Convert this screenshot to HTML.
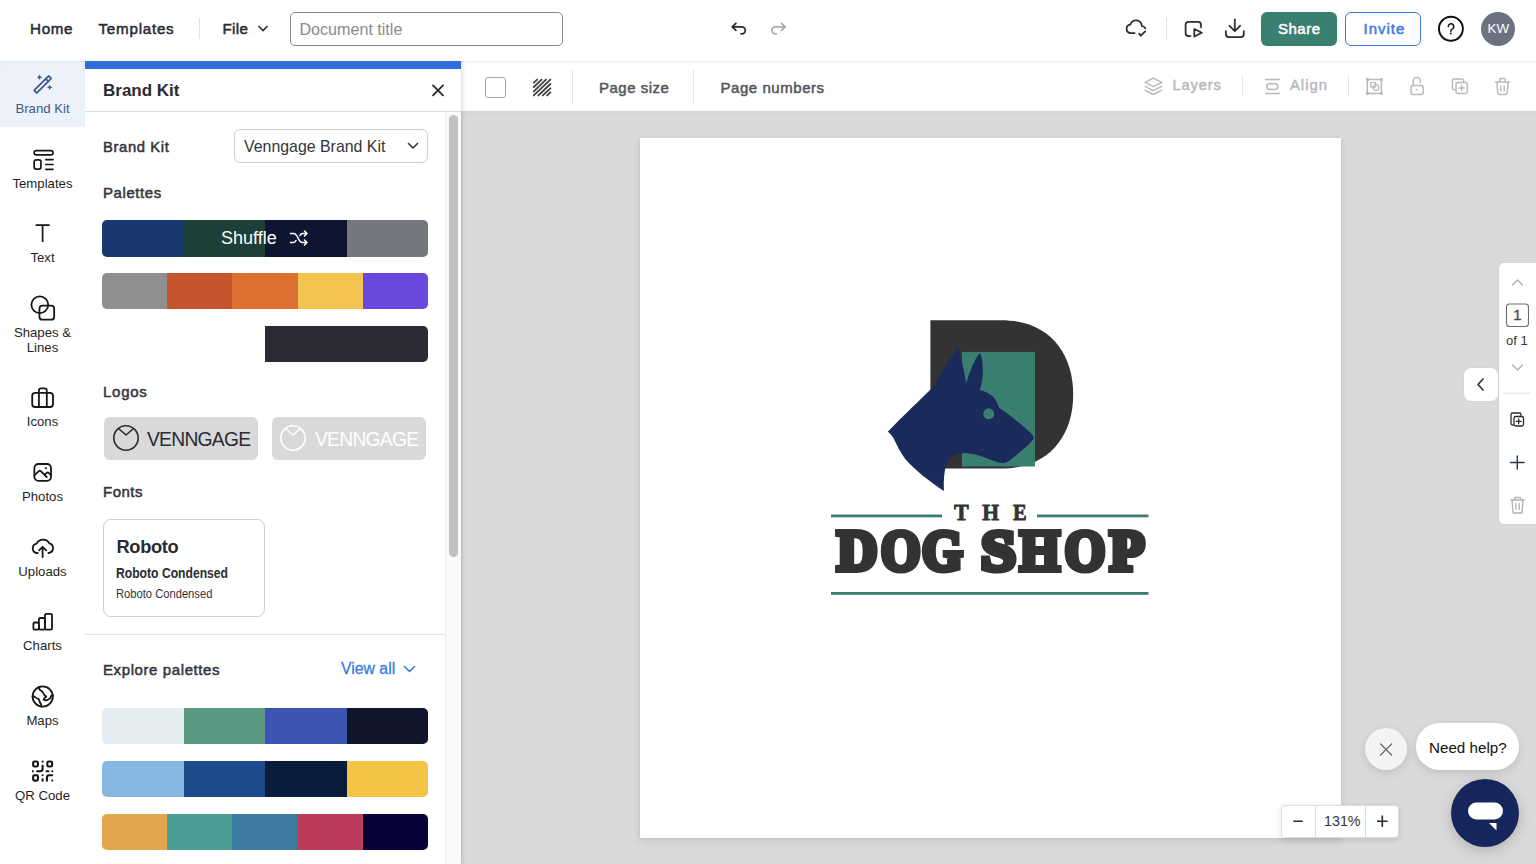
<!DOCTYPE html>
<html><head><meta charset="utf-8">
<style>
*{box-sizing:border-box;margin:0;padding:0}
html,body{width:1536px;height:864px;overflow:hidden;background:#dadada;font-family:"Liberation Sans",sans-serif;color:#2a2b33;position:relative}
.a{position:absolute}
.t{position:absolute;white-space:nowrap;line-height:1}
.hdr{left:0;top:0;width:1536px;height:61px;background:#fff;z-index:5}
.nav{font-size:15.2px;font-weight:700;color:#2a2b33}
.side{left:0;top:60px;width:85px;height:804px;background:#fff;z-index:3}
.sl{position:absolute;left:0;width:85px;text-align:center;font-size:13.2px;color:#1f1f24;line-height:15px;white-space:nowrap}
.si{position:absolute;left:0;top:0}
.panel{left:85px;top:60px;width:376px;height:804px;background:#fff;z-index:2;box-shadow:1px 0 3px rgba(0,0,0,.12)}
.tbar{left:461px;top:61px;width:1075px;height:50px;background:#fff;z-index:1}
.page{left:640px;top:138px;width:701px;height:700px;background:#fff;box-shadow:0 0 2px rgba(0,0,0,.10)}
.lbl{font-size:15px;font-weight:700;color:#33343c}
.pal{position:absolute;left:17px;width:326px;height:37px;border-radius:5px;overflow:hidden;display:flex}
.pal div{flex:1}
.tb{font-size:15px;font-weight:700;color:#55565c}
.dim{color:#b9b9bc;-webkit-text-stroke-color:#b9b9bc}
.sb{font-weight:400!important;-webkit-text-stroke:0.5px currentColor}
</style></head><body>

<!-- HEADER -->
<div class="a hdr">
  <div class="t nav sb" style="left:30px;top:21px;letter-spacing:0.67px">Home</div>
  <div class="t nav sb" style="left:98.5px;top:21px;letter-spacing:0.75px">Templates</div>
  <div class="a" style="left:199px;top:18px;width:1px;height:21px;background:#e2e2e2"></div>
  <div class="t nav sb" style="left:222.5px;top:21px;letter-spacing:0.33px">File</div>
  <svg class="a" style="left:257px;top:23px" width="12" height="10" viewBox="0 0 12 10"><path d="M1.5 3 L6 7.5 L10.5 3" fill="none" stroke="#2a2b33" stroke-width="1.6"/></svg>
  <div class="a" style="left:290px;top:12px;width:273px;height:34px;border:1.3px solid #8a8a8a;border-radius:5px"></div>
  <div class="t" style="left:299.5px;top:20.6px;font-size:16.1px;color:#8a8a8e">Document title</div>
  <svg class="a" style="left:0;top:0" width="1536" height="60" viewBox="0 0 1536 60">
  <g fill="none" stroke="#2a2b33" stroke-width="1.75" stroke-linecap="round" stroke-linejoin="round">
   <path d="M735.9 23.3 L732.2 26.85 L735.9 30.4 M732.2 26.85 H741.8 A3.5 3.5 0 0 1 741.8 33.85 H741"/>
   <path d="M1134.6 33.2 H1130.2 A4.35 4.35 0 0 1 1130.4 24.6 A5.8 5.8 0 0 1 1141.8 25.9 A4.4 4.4 0 0 1 1145.3 28.4 M1139.2 33.6 L1140.8 35.7 L1145.2 31.4"/>
   <path d="M1190.5 36.1 H1188.6 A3 3 0 0 1 1185.6 33.1 V24.8 A3 3 0 0 1 1188.6 21.8 H1198 A3 3 0 0 1 1201 24.8 V27.2 M1194.3 29 L1201.8 32.7 L1194.3 36.5 Z"/>
   <path d="M1234.8 19.4 V31 M1229.5 25.8 L1234.8 31.1 L1240.1 25.8 M1225.9 31 V34 A3 3 0 0 0 1228.9 37 H1240.8 A3 3 0 0 0 1243.8 34 V31"/>
  </g>
  <path d="M781.5 23.3 L785.2 26.85 L781.5 30.4 M785.2 26.85 H775.4 A3.5 3.5 0 0 0 775.4 33.85 H776.3" fill="none" stroke="#a9a9ac" stroke-width="1.75" stroke-linecap="round" stroke-linejoin="round"/>
  </svg>
  <div class="a" style="left:1166px;top:18px;width:1px;height:21px;background:#e2e2e2"></div>
  <div class="a" style="left:1261px;top:12px;width:76px;height:34px;background:#3a8070;border-radius:6px"></div>
  <div class="t sb" style="left:1278px;top:21px;font-size:15px;letter-spacing:0.5px;color:#fff">Share</div>
  <div class="a" style="left:1345px;top:12px;width:76px;height:34px;border:1.3px solid #3b7be0;border-radius:6px"></div>
  <div class="t sb" style="left:1363.5px;top:21px;font-size:15px;letter-spacing:1px;color:#3b7be0">Invite</div>
  
  <svg class="a" style="left:1436px;top:14px" width="30" height="30" viewBox="1436 14 30 30"><circle cx="1450.9" cy="28.75" r="11.95" fill="none" stroke="#111" stroke-width="1.95"/><path d="M1448.3 26.5 A2.75 2.75 0 1 1 1452.7 28.7 Q1450.8 29.7 1450.8 31.2" fill="none" stroke="#111" stroke-width="1.5" stroke-linecap="round"/><circle cx="1450.8" cy="33.5" r="0.95" fill="#111"/></svg>
  <div class="a" style="left:1481px;top:12px;width:34px;height:34px;background:#6b7280;border-radius:50%"></div>
  <div class="t" style="left:1487.5px;top:21.7px;font-size:13.4px;color:#fff">KW</div>
</div>

<!-- PAGE -->
<div class="a" style="left:640px;top:138px;width:701px;height:700px;background:#fff;box-shadow:0 3px 8px rgba(0,0,0,.10),0 0 2px rgba(0,0,0,.08)"></div>
<svg class="a" style="left:0;top:0" width="1536" height="864" viewBox="0 0 1536 864">
 <path d="M930.4 320.2 H1001 C1048 320.2 1073.2 352 1073.2 394.5 C1073.2 437 1048 468.6 1001 468.6 H930.4 Z" fill="#333333"/>
 <rect x="961.9" y="351.9" width="73.1" height="114.6" fill="#3a7e70"/>
 <path d="M957.8 347.4 C961.5 358 964.5 372 966.1 383.5 C969.5 372 974 360 980 353 C983.5 360 984 378 980 390 C987 392 993 395 995.5 400 C997.5 403 998 405 998.8 407.5 C1008 414 1020 423 1027.5 430 C1031 433 1034.5 436 1033.5 438.5 C1032 442 1029 444 1027 446 C1020 452 1013 458 1008 461.5 C1004 464 999 463 994 461 C983 457 970 452 962.4 453.3 C955 454 949.5 458 947.5 462 C944.5 468 943.5 478 943.9 491 C930 482 915 470 906 460 C900 452 897 445 893.5 438 C891.5 435 889.5 433 887.8 431.7 C905 414 920 400 933 387 C936.5 383 938 379 940.5 374.5 C946 365 953 355 957.8 347.4 Z" fill="#1a2a5a"/>
 <circle cx="988.8" cy="413.8" r="5.5" fill="#3a7e70"/>
 <rect x="831" y="514.5" width="111" height="2.8" fill="#3a7e70"/>
 <rect x="1037" y="514.5" width="111.5" height="2.8" fill="#3a7e70"/>
 <rect x="831" y="592" width="317.5" height="2.8" fill="#3a7e70"/>
 <g font-family="Liberation Serif" font-weight="700" fill="#333" stroke="#333" stroke-width="0.8" font-size="23.2">
  <text x="0" y="0" transform="translate(954.03 519.60) scale(0.953 1)">T</text>
  <text x="0" y="0" transform="translate(982.31 519.60) scale(0.931 1)">H</text>
  <text x="0" y="0" transform="translate(1013.00 519.60) scale(0.886 1)">E</text>
 </g>
 <g font-family="Liberation Serif" font-weight="700" fill="#333" stroke="#333" stroke-width="6" stroke-linejoin="miter" font-size="56.8">
  <text x="0" y="0" transform="translate(836.95 570.00) scale(0.985 1)">D</text>
  <text x="0" y="0" transform="translate(881.09 570.00) scale(0.893 1)">O</text>
  <text x="0" y="0" transform="translate(922.00 570.00) scale(0.920 1)">G</text>
  <text x="0" y="0" transform="translate(980.99 570.00) scale(1.105 1)">S</text>
  <text x="0" y="0" transform="translate(1019.84 570.00) scale(0.907 1)">H</text>
  <text x="0" y="0" transform="translate(1064.80 570.00) scale(0.918 1)">O</text>
  <text x="0" y="0" transform="translate(1109.74 570.00) scale(1.000 1)">P</text>
 </g>
</svg>

<!-- right page nav -->
<div class="a" style="left:1499px;top:263px;width:45px;height:260.5px;background:#fff;border-radius:5px;box-shadow:0 0 2px rgba(0,0,0,.08)"></div>
<svg class="a" style="left:1499px;top:263px" width="37" height="260" viewBox="1499 263 37 260">
 <g fill="none" stroke-width="1.4" stroke-linecap="round" stroke-linejoin="round">
  <path d="M1512.5 285 L1517.5 280 L1522.5 285" stroke="#b0b0b4"/>
  <path d="M1512.5 365 L1517.5 370 L1522.5 365" stroke="#b0b0b4"/>
  <rect x="1506.5" y="304" width="22" height="22.5" rx="3" stroke="#6b6b70" stroke-width="1.1"/>
  <path d="M1505 393.2 H1530" stroke="#e0e0e0" stroke-width="1"/>
  <path d="M1513.2 425 H1512.5 A1.5 1.5 0 0 1 1511 423.5 V414.5 A1.5 1.5 0 0 1 1512.5 413 H1519.5 A1.5 1.5 0 0 1 1521 414.5 V415.5" stroke="#2a2b33" stroke-width="1.3"/>
  <rect x="1514" y="416.5" width="9.5" height="9.5" rx="1.8" stroke="#2a2b33" stroke-width="1.3"/>
  <path d="M1518.7 418.8 V423.8 M1516.2 421.3 H1521.2" stroke="#2a2b33" stroke-width="1.3"/>
  <path d="M1517.3 456 V469 M1510.5 462.5 H1524.1" stroke="#2a3550" stroke-width="1.4"/>
  <path d="M1510.8 500 H1524 M1514.5 500 V498.5 Q1514.5 497.5 1515.5 497.5 H1519.5 Q1520.5 497.5 1520.5 498.5 V500 M1512 500 L1513 512 Q1513.2 513 1514.2 513 H1520.8 Q1521.8 513 1522 512 L1523 500 M1515.8 503.5 V509.5 M1519.2 503.5 V509.5" stroke="#b0b0b4" stroke-width="1.3"/>
 </g>
</svg>
<div class="t" style="left:1513px;top:307.3px;font-size:15.5px;color:#4a4b50;-webkit-text-stroke:0.3px #4a4b50">1</div>
<div class="t" style="left:1506px;top:333.5px;font-size:13px;color:#33343c">of 1</div>
<div class="a" style="left:1464px;top:368px;width:34px;height:33px;background:#fff;border-radius:7px;box-shadow:0 0 2px rgba(0,0,0,.08)"></div>
<svg class="a" style="left:1464px;top:368px" width="34" height="33" viewBox="0 0 34 33"><path d="M19 11 L14 16.5 L19 22" fill="none" stroke="#2a3550" stroke-width="1.7" stroke-linecap="round" stroke-linejoin="round"/></svg>

<!-- zoom control -->
<div class="a" style="left:1281px;top:804.5px;width:118px;height:33px;background:#fff;border:1px solid #dedede;border-radius:4px;box-shadow:0 2px 6px rgba(0,0,0,.12)"></div>
<div class="a" style="left:1315px;top:805px;width:1px;height:32px;background:#dcdcdc"></div>
<div class="a" style="left:1365px;top:805px;width:1px;height:32px;background:#dcdcdc"></div>
<svg class="a" style="left:1281px;top:804px" width="118" height="33" viewBox="0 0 118 33"><path d="M12.3 17.3 H21.8 M96 17.3 H106.7 M101.3 11.5 V23" stroke="#2a2b33" stroke-width="1.6"/></svg>
<div class="t" style="left:1324px;top:814px;font-size:14.3px;color:#33343c">131%</div>

<!-- chat -->
<div class="a" style="left:1365px;top:727.5px;width:42px;height:42px;background:#f4f4f4;border-radius:50%;box-shadow:0 3px 10px rgba(0,0,0,.12)"></div>
<svg class="a" style="left:1365px;top:727.5px" width="42" height="42" viewBox="0 0 42 42"><path d="M15.5 15.9 L26.7 27.1 M26.7 15.9 L15.5 27.1" stroke="#555" stroke-width="1.2" stroke-linecap="round"/></svg>
<div class="a" style="left:1416px;top:723px;width:103px;height:47px;background:#fff;border-radius:23.5px;box-shadow:0 3px 10px rgba(0,0,0,.12)"></div>
<div class="t" style="left:1429px;top:739.5px;font-size:15.2px;color:#111">Need help?</div>
<div class="a" style="left:1451px;top:779px;width:68px;height:68px;background:#16265c;border-radius:50%;box-shadow:0 4px 14px rgba(0,0,0,.18)"></div>
<svg class="a" style="left:1451px;top:779px" width="68" height="68" viewBox="0 0 68 68"><rect x="17" y="23.5" width="35" height="17" rx="8.5" fill="#fff"/><path d="M38 44 L45.5 44 L45.5 51.5 Z" fill="#fff"/></svg>
<!-- TOOLBAR -->
<div class="a" style="left:461px;top:61px;width:1075px;height:50px;background:#fff;z-index:1;box-shadow:inset 0 3px 3px -2px rgba(0,0,0,.10),0 1px 3px rgba(0,0,0,.05)"></div>
<div class="a" style="left:484.5px;top:77px;width:21.5px;height:21px;border:1.4px solid #a3a3a3;border-radius:3px;z-index:1"></div>
<svg class="a" style="left:0;top:0;z-index:1" width="1536" height="120" viewBox="0 0 1536 120">
 <g stroke="#444" stroke-width="1.9" stroke-linecap="round">
  <path d="M533.8 82.6 L537.2 79.6 M533.8 87 L541.6 79.6 M533.8 91.4 L546 79.6 M533.8 95.4 L550.4 79.6 M538.4 95.4 L550.4 84 M542.8 95.4 L550.4 88.4 M547.2 95.4 L550.4 92.4"/>
 </g>
 <g fill="none" stroke="#b9b9bc" stroke-width="1.5" stroke-linecap="round" stroke-linejoin="round">
  <path d="M1153.2 78.1 L1161.7 82.4 L1153.2 86.7 L1145.2 82.4 Z M1145.2 86.4 L1153.2 90.6 L1161.7 86.4 M1145.2 90.4 L1153.2 94.5 L1161.7 90.4"/>
  <path d="M1265.6 79.4 H1279.4 M1265.6 93.4 H1279.4"/>
  <rect x="1266.8" y="83.8" width="11" height="5.6" rx="2.8"/>
  <path d="M1367.3 79.4 H1381.4 V93.4 H1367.3 Z"/>
  <rect x="1370.6" y="82.6" width="5" height="4.6" rx="0.5" stroke-width="1.2"/>
  <circle cx="1376" cy="87.6" r="2.9" stroke-width="1.2"/>
  <path d="M1413.2 84.5 V81 A3.6 3.6 0 0 1 1420.4 81 V82.5"/>
  <rect x="1411" y="85.4" width="12.2" height="9" rx="2.2"/>
  <path d="M1454.8 89.8 H1454 A1.8 1.8 0 0 1 1452.4 88 V80.8 A1.8 1.8 0 0 1 1454.2 79 H1461.8 A1.8 1.8 0 0 1 1463.6 80.8 V82"/>
  <rect x="1456" y="82.4" width="11.2" height="11" rx="2"/>
  <path d="M1461.6 85.2 V90.6 M1458.9 87.9 H1464.3"/>
  <path d="M1495.4 82 H1509.4 M1499.8 82 V79.6 Q1499.8 78.4 1501 78.4 H1504 Q1505.2 78.4 1505.2 79.6 V82 M1496.8 82 L1497.8 93 Q1498 94.4 1499.4 94.4 H1505.6 Q1507 94.4 1507.2 93 L1508.2 82 M1500.8 86 V90.8 M1504.2 86 V90.8"/>
 </g>
 <g fill="#b9b9bc"><rect x="1366" y="78.1" width="2.7" height="2.7"/><rect x="1380" y="78.1" width="2.7" height="2.7"/><rect x="1366" y="92" width="2.7" height="2.7"/><rect x="1380" y="92" width="2.7" height="2.7"/><circle cx="1416.8" cy="89.8" r="0.9"/></g>
</svg>
<div class="a" style="left:572px;top:70px;width:1px;height:34px;background:#e6e6e6;z-index:1"></div>
<div class="a" style="left:693px;top:70px;width:1px;height:34px;background:#e6e6e6;z-index:1"></div>
<div class="t tb sb" style="left:599px;top:79.6px;letter-spacing:0.5px;z-index:1">Page size</div>
<div class="t tb sb" style="left:720.5px;top:79.6px;letter-spacing:0.55px;z-index:1">Page numbers</div>
<div class="t tb dim sb" style="left:1172.5px;top:77.7px;font-size:14.8px;letter-spacing:0.8px;z-index:1">Layers</div>
<div class="a" style="left:1242px;top:76px;width:1px;height:21px;background:#e6e6e6;z-index:1"></div>
<div class="t tb dim sb" style="left:1290px;top:77.7px;font-size:14.8px;letter-spacing:1px;z-index:1">Align</div>
<div class="a" style="left:1348px;top:76px;width:1px;height:21px;background:#e6e6e6;z-index:1"></div>
<!-- PANEL -->
<div class="a" style="left:85px;top:61px;width:376px;height:803px;background:#fff;z-index:2;box-shadow:2px 0 3px rgba(0,0,0,.10),-1px 0 3px rgba(0,0,0,.10)"></div>
<div class="a" style="left:85px;top:61px;width:376px;height:8px;background:#2f6fdb;z-index:2"></div>
<div class="t" style="left:103px;top:82px;font-size:17px;font-weight:700;color:#2a2b33;z-index:2">Brand Kit</div>
<svg class="a" style="left:430px;top:83px;z-index:2" width="16" height="15" viewBox="0 0 16 15"><path d="M3 2.3 L13 12.3 M13 2.3 L3 12.3" stroke="#2a2b33" stroke-width="1.8" stroke-linecap="round"/></svg>
<div class="a" style="left:85px;top:111px;width:376px;height:1px;background:#dedede;z-index:2"></div>
<div class="a" style="left:445px;top:112px;width:16px;height:752px;background:#fafafa;border-left:1px solid #ececec;z-index:2"></div>
<div class="a" style="left:449px;top:115px;width:9px;height:442px;background:#c1c1c1;border-radius:5px;z-index:2"></div>

<div class="t lbl sb" style="left:103px;top:140.2px;font-size:14.8px;letter-spacing:0.62px;z-index:2">Brand Kit</div>
<div class="a" style="left:234px;top:129px;width:194px;height:34px;border:1px solid #cfcfd2;border-radius:6px;z-index:2"></div>
<div class="t" style="left:244px;top:138.5px;font-size:15.9px;color:#33343c;z-index:2">Venngage Brand Kit</div>
<svg class="a" style="left:405px;top:140px;z-index:2" width="16" height="12" viewBox="0 0 16 12"><path d="M3.5 3.5 L8 8 L12.5 3.5" fill="none" stroke="#33343c" stroke-width="1.6" stroke-linecap="round" stroke-linejoin="round"/></svg>
<div class="t lbl sb" style="left:103px;top:185px;letter-spacing:0.57px;z-index:2">Palettes</div>

<div class="pal" style="left:102px;top:220px;z-index:2"><div style="background:#1a3870"></div><div style="background:#1c4038"></div><div style="background:#0e1530"></div><div style="background:#74777e"></div></div>
<div class="t" style="left:221px;top:229px;font-size:18px;color:#fff;z-index:2">Shuffle</div>
<svg class="a" style="left:287px;top:228px;z-index:2" width="24" height="20" viewBox="0 0 24 20"><g fill="none" stroke="#fff" stroke-width="1.6" stroke-linecap="round" stroke-linejoin="round"><path d="M3.5 5.5 H6.5 Q9 5.5 11 10 Q13 14.5 15.5 14.5 H20 M3.5 14.5 H6.5 Q8 14.5 9 12.5 M13 7.5 Q14 5.5 15.5 5.5 H20 M17.5 3 L20 5.5 L17.5 8 M17.5 12 L20 14.5 L17.5 17"/></g></svg>
<div class="pal" style="left:102px;top:273px;height:36px;z-index:2"><div style="background:#8f8f8f"></div><div style="background:#c4552e"></div><div style="background:#de7132"></div><div style="background:#f4c451"></div><div style="background:#6a48de"></div></div>
<div class="a" style="left:265px;top:326px;width:163px;height:36px;background:#2b2b35;border-radius:0 5px 5px 0;z-index:2"></div>

<div class="t lbl sb" style="left:103px;top:383.6px;letter-spacing:0.75px;z-index:2">Logos</div>
<div class="a" style="left:104px;top:417px;width:154px;height:43px;background:#d9d9d9;border-radius:6px;z-index:2"></div>
<div class="a" style="left:272px;top:417px;width:154px;height:43px;background:#d9d9d9;border-radius:6px;z-index:2"></div>
<svg class="a" style="left:104px;top:417px;z-index:2" width="322" height="43" viewBox="0 0 322 43">
 <g fill="none" stroke-width="1.6" stroke-linecap="round" stroke-linejoin="round">
  <circle cx="22" cy="21" r="12.2" stroke="#2a2b33"/>
  <path d="M14.5 11.5 L22 18 L29.5 11.5" stroke="#2a2b33"/>
  <circle cx="189" cy="21" r="12.2" stroke="#fff"/>
  <path d="M181.5 11.5 L189 18 L196.5 11.5" stroke="#fff"/>
 </g>
</svg>
<div class="t" style="left:147px;top:429.5px;font-size:19.3px;color:#2a2b33;letter-spacing:-0.75px;z-index:2">VENNGAGE</div>
<div class="t" style="left:315px;top:429.5px;font-size:19.3px;color:#fff;letter-spacing:-0.75px;z-index:2">VENNGAGE</div>

<div class="t lbl sb" style="left:103px;top:484px;letter-spacing:0.5px;z-index:2">Fonts</div>
<div class="a" style="left:103px;top:519px;width:162px;height:98px;border:1px solid #cfcfd2;border-radius:8px;z-index:2"></div>
<div class="t" style="left:116.5px;top:537.6px;font-size:18.3px;font-weight:700;color:#2a2b33;letter-spacing:-0.35px;z-index:2">Roboto</div>
<div class="t" style="left:116px;top:565px;font-size:15px;font-weight:700;color:#2a2b33;transform:scaleX(0.81);transform-origin:0 0;z-index:2">Roboto Condensed</div>
<div class="t" style="left:116px;top:587.3px;font-size:13px;color:#33343c;transform:scaleX(0.86);transform-origin:0 0;z-index:2">Roboto Condensed</div>

<div class="a" style="left:85px;top:634px;width:360px;height:1px;background:#e4e4e4;z-index:2"></div>
<div class="t lbl sb" style="left:103px;top:662.3px;letter-spacing:0.6px;z-index:2">Explore palettes</div>
<div class="t" style="left:341px;top:661.4px;font-size:15.8px;color:#3b7be0;-webkit-text-stroke:0.3px #3b7be0;z-index:2">View all</div>
<svg class="a" style="left:401px;top:663px;z-index:2" width="16" height="12" viewBox="0 0 16 12"><path d="M3.5 3.5 L8.5 8.5 L13.5 3.5" fill="none" stroke="#3b7be0" stroke-width="1.6" stroke-linecap="round" stroke-linejoin="round"/></svg>
<div class="pal" style="left:102px;top:708px;height:36px;z-index:2"><div style="background:#e4eef0"></div><div style="background:#5a9882"></div><div style="background:#3c55b0"></div><div style="background:#10152a"></div></div>
<div class="pal" style="left:102px;top:761px;height:36px;z-index:2"><div style="background:#86b8e2"></div><div style="background:#1c4a8c"></div><div style="background:#0a1c3c"></div><div style="background:#f4c444"></div></div>
<div class="pal" style="left:102px;top:814px;height:36px;z-index:2"><div style="background:#e0a84a"></div><div style="background:#4a9e96"></div><div style="background:#3c7aa0"></div><div style="background:#bc3a5a"></div><div style="background:#060436"></div></div>
<!-- SIDEBAR -->
<div class="a" style="left:0;top:61px;width:85px;height:803px;background:#fff;z-index:3;box-shadow:inset 0 3px 3px -2px rgba(0,0,0,.06)"></div>
<div class="a" style="left:0;top:61px;width:85px;height:66px;background:#edf2fa;z-index:3;box-shadow:inset 0 3px 3px -2px rgba(0,0,0,.06)"></div>
<svg class="a" style="left:0;top:0;z-index:4" width="85" height="864" viewBox="0 0 85 864">
 <g fill="none" stroke="#16161a" stroke-width="1.8" stroke-linecap="round" stroke-linejoin="round">
  <!-- wand -->
  <g stroke="#3d5a8a" stroke-width="1.8">
   <g transform="translate(42.7 84.4) rotate(-45)"><rect x="-10.3" y="-1.8" width="20.6" height="3.6" rx="0.6"/><path d="M6 -1.8 V1.8"/></g>
  </g>
  <g fill="#3d5a8a" stroke="none">
   <path d="M39.5 74.6 Q39.9 76.9 42.2 77.3 Q39.9 77.7 39.5 80 Q39.1 77.7 36.8 77.3 Q39.1 76.9 39.5 74.6Z"/>
   <path d="M49.7 84.7 Q50.1 87 52.4 87.4 Q50.1 87.8 49.7 90.1 Q49.3 87.8 47 87.4 Q49.3 87 49.7 84.7Z"/>
  </g>
  <!-- templates -->
  <rect x="34.15" y="150.55" width="18.9" height="4.4" rx="2.2" stroke-width="1.7"/>
  <rect x="34.15" y="159.85" width="6.8" height="9.2" rx="2" stroke-width="1.7"/>
  <path d="M45.8 159.6 H53 M45.8 164.5 H53 M45.8 169.3 H53" stroke-width="1.7"/>
  <!-- text T -->
  <path d="M35.6 225.1 H49.6 M42.6 225.1 V242" stroke-width="1.7" stroke-linecap="butt"/>
  <!-- shapes -->
  <circle cx="39.8" cy="304.75" r="8.4"/>
  <rect x="39.45" y="305.65" width="14.7" height="14" rx="3"/>
  <!-- icons briefcase -->
  <rect x="32.2" y="392.8" width="20.8" height="14.2" rx="3"/>
  <path d="M38.9 392.8 V390.6 Q38.9 388.4 41.1 388.4 H44.6 Q46.8 388.4 46.8 390.6 V392.8 M38.9 392.8 V407 M46.8 392.8 V407"/>
  <!-- photos -->
  <rect x="34.4" y="464" width="16.6" height="16.8" rx="4"/>
  <path d="M34.3 475.3 L38.6 471.3 Q39.8 470.2 41 471.3 L46.7 477 M45 474.3 L46.8 472.9 Q47.7 472.2 48.6 472.9 L51.2 475.2"/>
  <circle cx="45.9" cy="468.2" r="0.7" fill="#16161a" stroke-width="0.6"/>
  <!-- uploads -->
  <path d="M37.6 553 H36.5 A4.8 4.8 0 0 1 36.6 543.6 A7.2 7.2 0 0 1 49.3 543.4 A4.9 4.9 0 0 1 48.8 553 H48.4"/>
  <path d="M42.6 557 V547 M39 550.4 L42.6 546.8 L46.2 550.4"/>
  <!-- charts -->
  <rect x="33.4" y="622.5" width="5.5" height="7.1" rx="1.6"/>
  <rect x="38.9" y="618" width="6" height="11.6" rx="1.6"/>
  <rect x="44.9" y="613.8" width="7.1" height="15.8" rx="1.6"/>
  <!-- maps -->
  <circle cx="42.7" cy="696.5" r="10.1"/>
  <path d="M39 686.9 Q38.8 690.2 41.6 691.1 Q42.9 691.7 43.4 693.5 Q44.3 695.6 46.3 696.6 Q44.4 697.6 43.6 699.5 Q45.2 701 48.3 699.5 Q50.6 698.4 51 696.3 Q51.6 695.3 53 695.4 M32.5 696.4 Q34.6 696.3 35.6 697.5 Q36.6 698.6 38.2 698.7 Q39.3 699.8 39.6 701.6 Q40.1 703.1 41.1 704.2 Q41.4 705.4 41.3 706.7"/>
  <!-- QR -->
  <g stroke-width="2.1">
  <rect x="33.15" y="761.55" width="4.8" height="5" rx="1.3"/>
  <rect x="47.35" y="761.55" width="4.8" height="5" rx="1.3"/>
  <rect x="33.15" y="775.25" width="4.8" height="5.4" rx="1.3"/>
  <path d="M42.6 761.5 V761.6 M42.6 765.8 V768.8 Q42.6 771.2 40.2 771.2 H37.2 M32.9 771.2 V771.3 M46.6 771.2 H48.4 M52.3 771.2 V771.3 M42.6 775.2 V775.3 M42.6 779.4 V780.8 M46.9 780.8 V777.6 Q46.9 775.2 49.3 775.2 H52.2 M52.3 780.5 V780.6"/>
  </g>
 </g>
</svg>
<div class="sl" style="top:101.8px;color:#3d5a8a;line-height:1;z-index:4">Brand Kit</div>
<div class="sl" style="top:176.8px;line-height:1;z-index:4">Templates</div>
<div class="sl" style="top:250.8px;line-height:1;z-index:4">Text</div>
<div class="sl" style="top:326px;line-height:1;z-index:4">Shapes &amp;</div>
<div class="sl" style="top:341.1px;line-height:1;z-index:4">Lines</div>
<div class="sl" style="top:415.2px;line-height:1;z-index:4">Icons</div>
<div class="sl" style="top:489.8px;line-height:1;z-index:4">Photos</div>
<div class="sl" style="top:564.7px;line-height:1;z-index:4">Uploads</div>
<div class="sl" style="top:638.8px;line-height:1;z-index:4">Charts</div>
<div class="sl" style="top:714px;line-height:1;z-index:4">Maps</div>
<div class="sl" style="top:788.5px;line-height:1;z-index:4">QR Code</div>

</body></html>
